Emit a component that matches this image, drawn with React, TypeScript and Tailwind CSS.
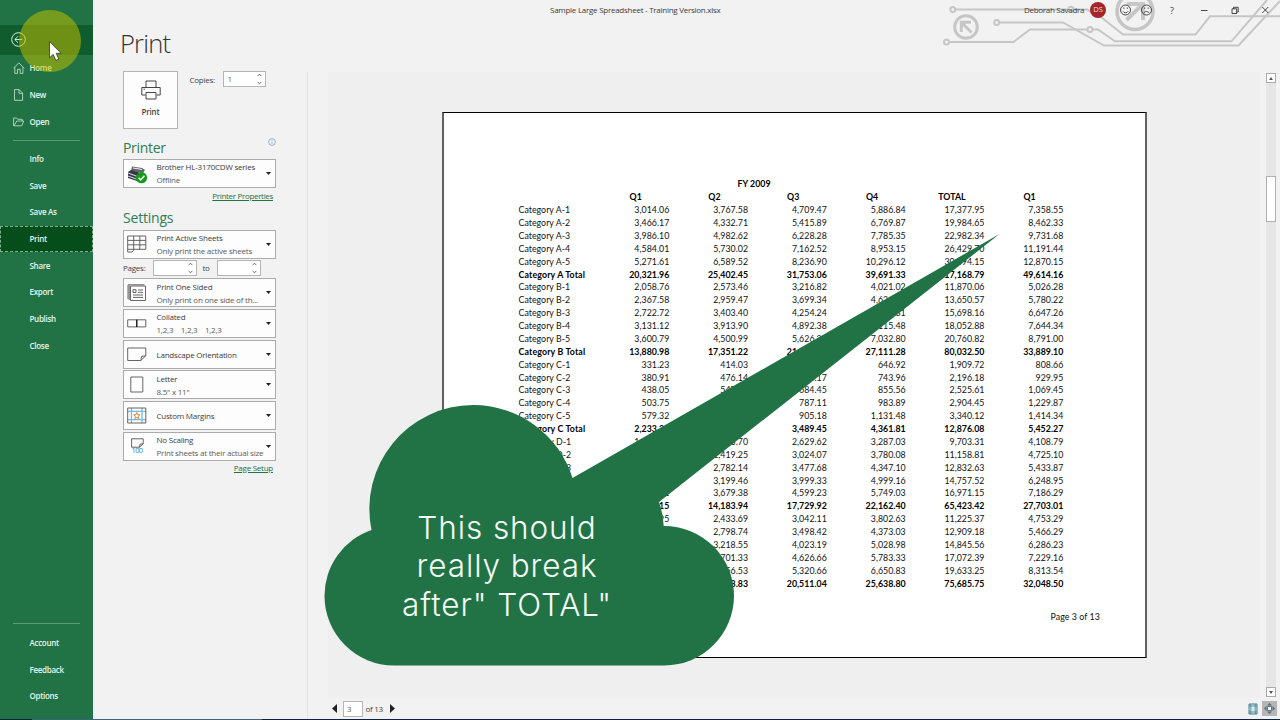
import type { ReactNode } from "react";
import { clsx } from "clsx";

type SheetRow = { label: string; values: string[]; total?: boolean };

const rows: SheetRow[] = [
  { label: "Category A-1", values: ["3,014.06", "3,767.58", "4,709.47", "5,886.84", "17,377.95", "7,358.55"] },
  { label: "Category A-2", values: ["3,466.17", "4,332.71", "5,415.89", "6,769.87", "19,984.65", "8,462.33"] },
  { label: "Category A-3", values: ["3,986.10", "4,982.62", "6,228.28", "7,785.35", "22,982.34", "9,731.68"] },
  { label: "Category A-4", values: ["4,584.01", "5,730.02", "7,162.52", "8,953.15", "26,429.70", "11,191.44"] },
  { label: "Category A-5", values: ["5,271.61", "6,589.52", "8,236.90", "10,296.12", "30,394.15", "12,870.15"] },
  { label: "Category A Total", values: ["20,321.96", "25,402.45", "31,753.06", "39,691.33", "117,168.79", "49,614.16"], total: true },
  { label: "Category B-1", values: ["2,058.76", "2,573.46", "3,216.82", "4,021.02", "11,870.06", "5,026.28"] },
  { label: "Category B-2", values: ["2,367.58", "2,959.47", "3,699.34", "4,624.18", "13,650.57", "5,780.22"] },
  { label: "Category B-3", values: ["2,722.72", "3,403.40", "4,254.24", "5,317.81", "15,698.16", "6,647.26"] },
  { label: "Category B-4", values: ["3,131.12", "3,913.90", "4,892.38", "6,115.48", "18,052.88", "7,644.34"] },
  { label: "Category B-5", values: ["3,600.79", "4,500.99", "5,626.24", "7,032.80", "20,760.82", "8,791.00"] },
  { label: "Category B Total", values: ["13,880.98", "17,351.22", "21,689.02", "27,111.28", "80,032.50", "33,889.10"], total: true },
  { label: "Category C-1", values: ["331.23", "414.03", "", "646.92", "1,909.72", "808.66"] },
  { label: "Category C-2", values: ["380.91", "476.14", "595.17", "743.96", "2,196.18", "929.95"] },
  { label: "Category C-3", values: ["438.05", "547.56", "684.45", "855.56", "2,525.61", "1,069.45"] },
  { label: "Category C-4", values: ["503.75", "", "787.11", "983.89", "2,904.45", "1,229.87"] },
  { label: "Category C-5", values: ["579.32", "", "905.18", "1,131.48", "3,340.12", "1,414.34"] },
  { label: "Category C Total", values: ["2,233.25", "", "3,489.45", "4,361.81", "12,876.08", "5,452.27"], total: true },
  { label: "Category D-1", values: ["1,682.96", "2,103.70", "2,629.62", "3,287.03", "9,703.31", "4,108.79"] },
  { label: "Category D-2", values: ["", "2,419.25", "3,024.07", "3,780.08", "11,158.81", "4,725.10"] },
  { label: "Category D-3", values: ["", "2,782.14", "3,477.68", "4,347.10", "12,832.63", "5,433.87"] },
  { label: "", values: ["", "3,199.46", "3,999.33", "4,999.16", "14,757.52", "6,248.95"] },
  { label: "", values: ["2,943.51", "3,679.38", "4,599.23", "5,749.03", "16,971.15", "7,186.29"] },
  { label: "", values: ["11,347.15", "14,183.94", "17,729.92", "22,162.40", "65,423.42", "27,703.01"], total: true },
  { label: "", values: ["1,946.95", "2,433.69", "3,042.11", "3,802.63", "11,225.37", "4,753.29"] },
  { label: "", values: ["", "2,798.74", "3,498.42", "4,373.03", "12,909.18", "5,466.29"] },
  { label: "", values: ["", "3,218.55", "4,023.19", "5,028.98", "14,845.56", "6,286.23"] },
  { label: "", values: ["", "3,701.33", "4,626.66", "5,783.33", "17,072.39", "7,229.16"] },
  { label: "", values: ["", "4,256.53", "5,320.66", "6,650.83", "19,633.25", "8,313.54"] },
  { label: "", values: ["", "16,408.83", "20,511.04", "25,638.80", "75,685.75", "32,048.50"], total: true },
];

const headings = ["Q1", "Q2", "Q3", "Q4", "TOTAL", "Q1"];

function NavItem({ label, icon, active }: { label: string; icon?: ReactNode; active?: boolean }) {
  return (
    <div
      className={clsx(
        "flex h-[26.67px] items-center text-[8px] font-semibold leading-none tracking-[-0.3px] text-[#e6f3ea]",
        active && "border border-dashed border-[#7fae8d] bg-[#054d1b]",
      )}
    >
      <span className={clsx("flex shrink-0 items-center", active ? "w-[28.5px] pl-3" : "w-[29.5px] pl-[13px]")}>{icon}</span>
      {label}
    </div>
  );
}

function Sidebar() {
  const line = { fill: "none", stroke: "#b9d8c4", strokeWidth: 0.9 };
  return (
    <nav className="flex w-[93px] shrink-0 flex-col bg-[#217346] pt-[25px]">
      <div className="flex h-[30px] items-center bg-[#0f5c2f] pb-[2px] pl-[11px]">
        <svg width="15" height="15" viewBox="0 0 15 15" fill="none" stroke="#d8eadf" strokeWidth="1">
          <circle cx="7.5" cy="7.5" r="6.8" />
          <path d="M11.2 7.5H4M7 4.3 3.8 7.5 7 10.7" />
        </svg>
      </div>
      <NavItem
        label="Home"
        icon={
          <svg width="12" height="12" viewBox="0 0 12 12" {...line}>
            <path d="M.5 6.3 5.8.8l5.3 5.5M1.8 5.2v6.2h2.7V7.3h2.7v4.1h2.7V5.2" />
          </svg>
        }
      />
      <NavItem
        label="New"
        icon={
          <svg width="12" height="12" viewBox="0 0 12 12" {...line}>
            <path d="M1.5.6h4.6l3.5 3.5v7.2H1.5zM6 .6v3.7h3.6" />
          </svg>
        }
      />
      <NavItem
        label="Open"
        icon={
          <svg width="12" height="12" viewBox="0 0 12 12" {...line}>
            <path d="M.6 9.8V2h3.1l1.1 1.3h4.4v1.6M.6 9.8h8.1l2-4.8H3.8L2.6 7 .9 9.8" />
          </svg>
        }
      />
      <div className="h-[10.67px] shrink-0 px-[13px] pt-[5px]">
        <div className="h-px bg-[#5c9c75]" />
      </div>
      {["Info", "Save", "Save As", "Print", "Share", "Export", "Publish", "Close"].map((label) => (
        <NavItem key={label} label={label} active={label === "Print"} />
      ))}
      <div className="mt-auto h-[6.3px] shrink-0 px-[13px]">
        <div className="h-px bg-[#5c9c75]" />
      </div>
      <div className="pb-[9px]">
        {["Account", "Feedback", "Options"].map((label) => (
          <NavItem key={label} label={label} />
        ))}
      </div>
    </nav>
  );
}

function Spinner({ value, className }: { value?: string; className?: string }) {
  return (
    <div className={clsx("flex h-4 items-center justify-between border border-[#b5b5b5] bg-white pl-1 pr-[3px] text-[8px] text-[#666]", className)}>
      <span>{value}</span>
      <svg width="5" height="12" viewBox="0 0 5 12" fill="none" stroke="#555" strokeWidth="0.9">
        <path d="M.7 3 2.5 1.2 4.3 3M.7 9l1.8 1.8L4.3 9" />
      </svg>
    </div>
  );
}

type OptionProps = { icon: ReactNode; title: string; note?: string };

function Option({ icon, title, note }: OptionProps) {
  return (
    <div className="flex h-[28.8px] w-[153px] shrink-0 items-center border border-[#ababab] bg-[#fdfdfd] pr-1">
      <div className="flex w-[32.5px] shrink-0 items-center pl-[3px]">{icon}</div>
      <div className="flex min-w-0 flex-1 flex-col whitespace-pre text-[8px] leading-[13.2px] tracking-[-0.22px] text-[#3c3c3c]">
        <span className={title.startsWith("Print") ? "tracking-[-0.16px]" : ""}>{title}</span>
        {note && <span className="text-[#5c5c5c]">{note}</span>}
      </div>
      <svg width="5" height="3" viewBox="0 0 5 3" className="shrink-0">
        <path d="M0 0h5L2.5 3z" fill="#222" />
      </svg>
    </div>
  );
}

const ink = { fill: "none", stroke: "#555", strokeWidth: 0.9 };

function PrinterIcon() {
  return (
    <svg width="22" height="20" viewBox="0 0 22 20" className="mt-1">
      <path d="M5 1.5 15 3l3 2-2 3-12-2z" fill="#62656c" />
      <path d="m6 3 9 1.5M3 6l13 3" stroke="#eee" strokeWidth="1" />
      <path d="m1 7 3-2 13 4v5l-4 3L1 13z" fill="#34373e" />
      <path d="m1 8 11 4 5-3M1 11l11 4" stroke="#ccd" strokeWidth="1.2" fill="none" />
      <circle cx="14.5" cy="12.7" r="5.6" fill="#139a18" />
      <path d="m11.7 12.8 2 2.2 3.7-4.2" stroke="#fff" strokeWidth="1.5" fill="none" />
    </svg>
  );
}

function SheetsIcon() {
  return (
    <svg width="20" height="18" viewBox="0 0 20 18" {...ink}>
      <path d="M.7 1h18.1v13.3H7.5L5 17H.7zM.7 5.4h18.1M.7 9.8h18.1M6.7 1v13.3M12.8 1v13.3M.7 14.3h6.8" />
    </svg>
  );
}

function OneSidedIcon() {
  return (
    <svg width="20" height="18" viewBox="0 0 20 18" {...ink}>
      <path d="M3.5 2h15v14.5h-15zM1 15V.8h16.5M2.2 16V1.5" />
      <path d="M6 5.7h3v2.8H6zM11 6h5M11 8.3h5M6 11h10M6 13.4h10" />
    </svg>
  );
}

function CollatedIcon() {
  return (
    <svg width="20" height="9" viewBox="0 0 20 9" {...ink}>
      <path d="M.7.8h18.1v7.1H.7z" />
      <path d="M9.8.8v7.1" stroke="#000" strokeWidth="1.3" />
    </svg>
  );
}

function LandscapeIcon() {
  return (
    <svg width="20" height="15" viewBox="0 0 20 15" {...ink}>
      <path d="M.7 1h18.1v7.8l-5 4.7H.7zM13.8 13.5l.8-4.2 4.2-.5" />
    </svg>
  );
}

function LetterIcon() {
  return (
    <svg width="20" height="17" viewBox="0 0 20 17" {...ink}>
      <path d="M3.8 1h12v15h-12z" />
    </svg>
  );
}

function MarginsIcon() {
  return (
    <svg width="20" height="17" viewBox="0 0 20 17" {...ink}>
      <path d="M4.5 1v15M15 1v15M.7 4.3h18.1M.7 12.7h18.1" stroke="#79b9dc" strokeWidth="1.3" />
      <path d="M.7 1h18.1v15H.7z" />
      <path d="m9.8 5.5.9 2.2 2.2.1-1.7 1.5.6 2.3-2-1.2-2 1.2.6-2.3-1.7-1.5 2.2-.1z" stroke="#d9782d" />
    </svg>
  );
}

function ScalingIcon() {
  return (
    <div className="flex w-5 flex-col items-center">
      <svg width="13" height="10" viewBox="0 0 13 10" {...ink}>
        <path d="M.6.8h11.6v5L8.5 9.2H.6zM8.5 9.2l.5-3 3.2-.4" />
      </svg>
      <span className="-mt-0.5 text-[7.5px] leading-[8px] tracking-[-0.7px] text-[#2e8cb8]">100</span>
    </div>
  );
}

function PrintPanel() {
  return (
    <section className="flex w-[214px] shrink-0 flex-col pl-[30px]">
      <h1 className="-ml-[3px] mt-[25px] h-[46px] text-[25.5px] font-light leading-[36px] tracking-[-0.8px] text-[#333]">Print</h1>
      <div className="flex h-[58px]">
        <div className="flex w-[55px] flex-col items-center border border-[#b5b5b5] bg-[#fdfdfd] pt-2">
          <svg width="20" height="20" viewBox="0 0 20 20" fill="none" stroke="#444" strokeWidth="1">
            <path d="M5 7.5V1h10v6.5M4.5 15H.8V7.5h18.4V15h-3.7M5 12.5h10V19H5z" />
            <path d="M2.5 9.2h1.4" />
          </svg>
          <span className="mt-1.5 text-[8px] font-semibold leading-3 tracking-[-0.2px] text-[#444]">Print</span>
        </div>
        <span className="ml-[11.5px] mt-[3px] w-[33px] text-[8px] leading-3 tracking-[-0.25px] text-[#444]">Copies:</span>
        <Spinner value="1" className="w-[43.5px]" />
      </div>
      <div className="mt-[9px] flex h-[21px] w-[153px] items-start justify-between">
        <h2 className="text-[14px] leading-5 tracking-[-0.3px] text-[#2f7d53]">Printer</h2>
        <svg width="8" height="8" viewBox="0 0 8 8" fill="none" stroke="#6d9cc0" strokeWidth="0.7">
          <circle cx="4" cy="4" r="3.4" />
          <path d="M4 3.4V6M4 2v.7" />
        </svg>
      </div>
      <Option icon={<PrinterIcon />} title="Brother HL-3170CDW series" note="Offline" />
      <div className="mt-px w-[150px] text-right text-[8px] leading-[13px] tracking-[-0.32px] text-[#217346] underline">Printer Properties</div>
      <h2 className="mt-[6.5px] h-[21.5px] text-[14px] leading-5 tracking-[-0.2px] text-[#2f7d53]">Settings</h2>
      <Option icon={<SheetsIcon />} title="Print Active Sheets" note="Only print the active sheets" />
      <div className="flex h-[19.8px] items-center text-[8px] tracking-[-0.25px] text-[#444]">
        <span className="w-[30px]">Pages:</span>
        <Spinner className="w-[43.5px]" />
        <span className="w-[20.5px] pl-1.5">to</span>
        <Spinner className="w-[43.5px]" />
      </div>
      <div className="flex flex-col gap-[1.9px]">
        <Option icon={<OneSidedIcon />} title="Print One Sided" note="Only print on one side of th..." />
        <Option icon={<CollatedIcon />} title="Collated" note="1,2,3    1,2,3    1,2,3" />
        <Option icon={<LandscapeIcon />} title="Landscape Orientation" />
        <Option icon={<LetterIcon />} title="Letter" note={'8.5" x 11"'} />
        <Option icon={<MarginsIcon />} title="Custom Margins" />
        <Option icon={<ScalingIcon />} title="No Scaling" note="Print sheets at their actual size" />
      </div>
      <div className="w-[150px] text-right text-[8px] leading-[13px] tracking-[-0.25px] text-[#217346] underline">Page Setup</div>
    </section>
  );
}

function HeaderArt() {
  return (
    <svg className="absolute right-0 top-0" width="340" height="50" viewBox="940 0 340 50" fill="none" stroke="#c6c6c6" strokeWidth="2">
      <path d="M955.5 9.5H1068M1074 9.5H1087L1101 17 1123 34.5H1195.5L1210 16.3H1280" />
      <path d="M999.5 22.5H1063L1104 45.5H1238.5L1280 1" />
      <path d="M949.5 42H1013.5L1030 29.5H1087M1093 29.5H1098L1115 41.3H1231.5L1267 0" />
      <circle cx="952.8" cy="9.6" r="2.5" />
      <circle cx="1071" cy="9.2" r="2.5" />
      <circle cx="996.7" cy="22.5" r="2.5" />
      <circle cx="946.5" cy="42" r="2.5" />
      <circle cx="1090" cy="29.5" r="2.5" />
      <circle cx="966" cy="27" r="11.3" strokeWidth="3" />
      <path d="M961.3 32V22.2H971M962 23 971.5 32.5" strokeWidth="3" />
      <circle cx="1135" cy="11.5" r="18" strokeWidth="3.6" />
      <path d="M1127 4H1143V20M1142 5 1126.5 20" strokeWidth="4" />
    </svg>
  );
}

function TitleBar() {
  return (
    <header className="relative h-[72px] shrink-0 text-[8px] leading-none text-[#3c3c3c]">
      <HeaderArt />
      <div className="relative flex h-5 items-center">
        <span className="ml-[457px] w-[474px] shrink-0 whitespace-nowrap tracking-[-0.26px]">Sample Large Spreadsheet - Training Version.xlsx</span>
        <span className="w-[66px] shrink-0 whitespace-nowrap tracking-[-0.3px]">Deborah Savadra</span>
        <span className="flex size-4 shrink-0 items-center justify-center rounded-full bg-[#a4262c] text-[7.5px] text-[#f3d6d7]">DS</span>
        <svg className="ml-[14px] shrink-0" width="32" height="12" viewBox="0 0 32 12" fill="none" stroke="#333" strokeWidth="0.9">
          <circle cx="5.5" cy="6" r="5" />
          <path d="M3 7.3c1 2 4 2 5 0M3.8 3.5v1.3M7.2 3.5v1.3" />
          <circle cx="26.5" cy="6" r="5" />
          <path d="M24 9c1-2 4-2 5 0M24.8 3.5v1.3M28.2 3.5v1.3" />
        </svg>
        <span className="ml-[18px] w-[31px] shrink-0 text-[9px]">?</span>
        <svg className="shrink-0" width="70" height="10" viewBox="0 0 70 10" fill="none" stroke="#333" strokeWidth="0.9">
          <path d="M0 5.5h6.5M31 3.8h4.7v4.7H31zM32.5 3.8V2.3h4.7V7h-1.5M61.3 2l6 6M67.3 2l-6 6" />
        </svg>
      </div>
    </header>
  );
}

function SheetPage() {
  return (
    <div className="ml-[114px] mt-10 flex h-[546px] w-[705px] flex-col border-x-2 border-y-[1.5px] border-x-[#606060] border-y-black bg-white pl-[74.5px] pt-[65px] font-['Lato',sans-serif] text-[8.8px] leading-[12.885px] tracking-[0.03px] text-[#111]">
      <div className="h-[12.885px] pl-[219px] font-bold text-black">FY 2009</div>
      <div className="mb-[0.4px] flex h-[12.885px] pl-[72.5px] font-bold text-black">
        {headings.map((h, i) => (
          <span key={i} className={clsx("w-[78.8px]", h === "TOTAL" ? "pl-8" : "pl-[38.5px]")}>{h}</span>
        ))}
      </div>
      {rows.map((row, index) => (
        <div key={index} className={clsx("flex h-[12.885px] whitespace-nowrap", row.total && "font-bold text-black")}>
          <span className={clsx("w-[72px] shrink-0", row.total && "tracking-[0.15px]")}>{row.label}</span>
          {row.values.map((value, i) => (
            <span key={i} className="w-[78.8px] shrink-0 text-right">{value}</span>
          ))}
        </div>
      ))}
      <div className="ml-[532px] mt-[20.5px] text-[8.9px]">Page 3 of 13</div>
    </div>
  );
}

function ScrollButton({ down }: { down?: boolean }) {
  return (
    <div className="flex h-[10px] w-[10px] items-center justify-center border border-[#aaa] bg-white">
      <svg width="4" height="3" viewBox="0 0 4 3">
        <path d={down ? "M0 0h4L2 3z" : "M0 3h4L2 0z"} fill="#555" />
      </svg>
    </div>
  );
}

function Preview() {
  return (
    <main className="ml-5 flex min-w-0 flex-1 flex-col">
      <div className="flex h-[626px] shrink-0">
        <div className="w-[932px] bg-[#efefef]">
          <SheetPage />
        </div>
        <div className="my-px ml-[6px] flex w-[10px] flex-col justify-between bg-[#e6e6e6]">
          <ScrollButton />
          <div className="mb-auto mt-[93px] h-[46px] border border-[#b0b0b0] bg-white" />
          <ScrollButton down />
        </div>
      </div>
      <div className="flex h-[21px] items-center pl-1 text-[8px] tracking-[-0.3px] text-[#444]">
        <svg width="5" height="9" viewBox="0 0 5 9"><path d="M5 0v9L0 4.5z" fill="#222" /></svg>
        <span className="ml-[6px] flex h-4 w-[20px] items-center border border-[#b5b5b5] bg-white pl-[3px] text-[#666]">3</span>
        <span className="ml-[2.5px] w-[24.5px]">of 13</span>
        <svg width="5" height="9" viewBox="0 0 5 9"><path d="M0 0v9l5-4.5z" fill="#222" /></svg>
        <svg className="ml-auto" width="10" height="12" viewBox="0 0 10 12" fill="none" stroke="#477c8c">
          <path d="M1 1h8v10H1z" fill="#d3edf3" />
          <path d="M2.8 1v10M7.2 1v10M1 3h8M1 9h8" strokeWidth="0.8" />
        </svg>
        <span className="ml-1 mr-[3px] flex size-[15px] items-center justify-center bg-[#b5b5b5]">
          <svg width="11" height="11" viewBox="0 0 11 11">
            <path d="M5.5 0 8 2.5H3zM5.5 11 8 8.5H3zM0 5.5 2.5 3v5zM11 5.5 8.5 3v5z" fill="#47758a" />
            <path d="M3.5 3.5h4v4h-4z" fill="#fff" stroke="#555" strokeWidth="0.8" />
          </svg>
        </span>
      </div>
    </main>
  );
}

function CloudCallout() {
  return (
    <div className="pointer-events-none absolute left-[324px] top-[233px] h-[433px] w-[677px]">
      <svg width="677" height="433" viewBox="324 233 677 433">
        <path
          d="M394 665.5A69.6 69.6 0 0 1 324.5 596A69.6 69.6 0 0 1 371.5 530A104 104 0 0 1 473 405A104 104 0 0 1 572.5 478L999.5 234L659 502Q663 513 663.7 526A69.8 69.8 0 0 1 734 596A69.8 69.8 0 0 1 664.5 665.5Z"
          fill="#217346"
        />
      </svg>
      <div className="absolute left-[63px] top-[275.5px] w-[240px] text-center font-['Inter',sans-serif] text-[31.5px] font-light leading-[38.8px] tracking-[0.9px] text-[#f4faf6]">
        <div>This should</div>
        <div>really break</div>
        <div>after" TOTAL"</div>
      </div>
    </div>
  );
}

function Pointer() {
  return (
    <>
      <div className="absolute left-[19px] top-[10px] size-[62px] rounded-full bg-[rgba(190,190,0,0.55)] blur-[0.7px]" />
      <svg className="absolute left-[48px] top-[40px]" width="16" height="22" viewBox="0 0 16 22">
        <path d="M1.5 1.5v16.3l3.7-3.4 2.6 6 3-1.3-2.6-5.8h4.9z" fill="#fff" stroke="#333" strokeWidth="0.8" />
      </svg>
    </>
  );
}

export default function App() {
  return (
    <div className="relative flex h-[720px] w-[1280px] flex-col overflow-hidden bg-[#f2f2f2] font-['Open_Sans','Noto_Sans',sans-serif]">
      <div className="flex h-[718.5px] shrink-0">
        <Sidebar />
        <div className="flex w-[1187px]">
          <PrintPanel />
          <div className="flex flex-1 flex-col">
            <div className="-ml-[214px]">
              <TitleBar />
            </div>
            <div className="flex flex-1 border-l border-[#e2e2e2]">
              <Preview />
            </div>
          </div>
        </div>
      </div>
      <div className="flex flex-1 bg-[#0c2340]">
        <div className="ml-8 w-[230px] bg-[#3c6482]" />
      </div>
      <CloudCallout />
      <Pointer />
    </div>
  );
}
